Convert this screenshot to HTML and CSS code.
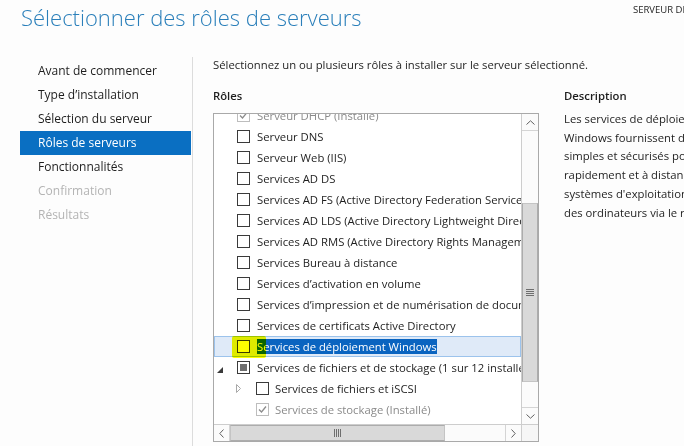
FILE: index.html
```html
<!DOCTYPE html>
<html lang="fr">
<head>
<meta charset="utf-8">
<title>Sélectionner des rôles de serveurs</title>
<link rel="stylesheet" href="styles.css">
</head>
<body>
<div class="page">
  <header class="head">
    <h1 class="title">Sélectionner des rôles de serveurs</h1>
    <div class="server">SERVEUR DE DESTINATION</div>
  </header>
  <div class="main">
    <nav class="steps">
      <div class="step">Avant de commencer</div>
      <div class="step">Type d’installation</div>
      <div class="step">Sélection du serveur</div>
      <div class="step current">Rôles de serveurs</div>
      <div class="step">Fonctionnalités</div>
      <div class="step disabled">Confirmation</div>
      <div class="step disabled">Résultats</div>
    </nav>
    <div class="content">
      <p class="intro">Sélectionnez un ou plusieurs rôles à installer sur le serveur sélectionné.</p>
      <div class="cols">
        <section class="roles">
          <h2 class="label">Rôles</h2>
          <div class="listbox">
            <div class="viewport">
              <div class="tree">
                <div class="row installed"><span class="exp"></span><span class="cb done"><svg viewBox="0 0 11 11" width="11" height="11"><polyline points="2,5.5 4.5,8 9,2.5" fill="none" stroke="#8c8c8c" stroke-width="1.3"/></svg></span><span class="txt">Serveur DHCP (Installé)</span></div>
                <div class="row"><span class="exp"></span><span class="cb"></span><span class="txt">Serveur DNS</span></div>
                <div class="row"><span class="exp"></span><span class="cb"></span><span class="txt">Serveur Web (IIS)</span></div>
                <div class="row"><span class="exp"></span><span class="cb"></span><span class="txt">Services AD DS</span></div>
                <div class="row"><span class="exp"></span><span class="cb"></span><span class="txt">Services AD FS (Active Directory Federation Services)</span></div>
                <div class="row"><span class="exp"></span><span class="cb"></span><span class="txt">Services AD LDS (Active Directory Lightweight Directory Services)</span></div>
                <div class="row"><span class="exp"></span><span class="cb"></span><span class="txt">Services AD RMS (Active Directory Rights Management Services)</span></div>
                <div class="row"><span class="exp"></span><span class="cb"></span><span class="txt">Services Bureau à distance</span></div>
                <div class="row"><span class="exp"></span><span class="cb"></span><span class="txt">Services d’activation en volume</span></div>
                <div class="row"><span class="exp"></span><span class="cb"></span><span class="txt">Services d’impression et de numérisation de documents</span></div>
                <div class="row"><span class="exp"></span><span class="cb"></span><span class="txt">Services de certificats Active Directory</span></div>
                <div class="row selected"><span class="exp"></span><span class="cb"></span><span class="txt"><span class="sel">Services de déploiement Windows</span></span><span class="marker"></span></div>
                <div class="row"><span class="exp"><svg class="tri-open" viewBox="0 0 6 6" width="6" height="6"><polygon points="6,0 6,6 0,6" fill="#3a3a3a"/></svg></span><span class="cb partial"></span><span class="txt">Services de fichiers et de stockage (1 sur 12 installé(s))</span></div>
                <div class="row l1"><span class="exp"><svg viewBox="0 0 6 9" width="6" height="9"><polygon points="0.5,0.5 4.5,4.5 0.5,8.5" fill="none" stroke="#a8a8a8" stroke-width="1"/></svg></span><span class="cb"></span><span class="txt">Services de fichiers et iSCSI</span></div>
                <div class="row l1 installed"><span class="exp"></span><span class="cb done"><svg viewBox="0 0 11 11" width="11" height="11"><polyline points="2,5.5 4.5,8 9,2.5" fill="none" stroke="#8c8c8c" stroke-width="1.3"/></svg></span><span class="txt">Services de stockage (Installé)</span></div>
              </div>
            </div>
            <div class="vscroll">
              <div class="sb-btn up"><svg viewBox="0 0 9 5" width="9" height="5"><polyline points="0.5,4.5 4.5,0.8 8.5,4.5" fill="none" stroke="#606060" stroke-width="1"/></svg></div>
              <div class="vtrack-top"></div>
              <div class="vthumb"><span class="vgrip"></span></div>
              <div class="vtrack-bottom"></div>
              <div class="sb-btn down"><svg viewBox="0 0 9 5" width="9" height="5"><polyline points="0.5,0.5 4.5,4.2 8.5,0.5" fill="none" stroke="#606060" stroke-width="1"/></svg></div>
            </div>
            <div class="hscroll">
              <div class="sb-btn left"><svg viewBox="0 0 5 9" width="5" height="9"><polyline points="4.5,0.5 0.8,4.5 4.5,8.5" fill="none" stroke="#606060" stroke-width="1"/></svg></div>
              <div class="hthumb"><span class="hgrip"></span></div>
              <div class="htrack"></div>
              <div class="sb-btn right"><svg viewBox="0 0 5 9" width="5" height="9"><polyline points="0.5,0.5 4.2,4.5 0.5,8.5" fill="none" stroke="#606060" stroke-width="1"/></svg></div>
            </div>
            <div class="corner"></div>
          </div>
        </section>
        <section class="desc">
          <h2 class="label">Description</h2>
          <p class="desc-text">
            <span class="line">Les services de déploiement</span>
            <span class="line">Windows fournissent des outils</span>
            <span class="line">simples et sécurisés pour déployer</span>
            <span class="line">rapidement et à distance des</span>
            <span class="line">systèmes d'exploitation Windows sur</span>
            <span class="line">des ordinateurs via le réseau.</span>
          </p>
        </section>
      </div>
    </div>
  </div>
</div>
</body>
</html>
```

FILE: styles.css
```css
* { box-sizing: border-box; }
html, body { margin: 0; padding: 0; }
body {
  width: 684px;
  height: 446px;
  overflow: hidden;
  background: #fdfdfd;
  font-family: "Open Sans", "Noto Sans", sans-serif;
  font-size: 11.3px;
  color: #1e1e1e;
}
.page { display: flex; flex-direction: column; height: 446px; }

.head { height: 57px; flex: none; display: flex; align-items: flex-start; }
.title {
  margin: 2px 0 0 21px;
  font-size: 22px;
  font-weight: 300;
  line-height: 30px;
  color: #2a7fba;
  white-space: nowrap;
}
.server {
  margin-left: auto;
  width: 51px;
  margin-top: 4px;
  font-size: 9.5px;
  line-height: 12px;
  white-space: nowrap;
}

.main { flex: 1; display: flex; min-height: 0; }
.steps { width: 193px; flex: none; border-right: 1px solid #dcdcdc; padding-top: 2px; }
.step {
  margin-left: 20px;
  width: 171px;
  height: 24px;
  padding-left: 18px;
  font-size: 12px;
  line-height: 24px;
  white-space: nowrap;
}
.step.current { background: #0a6fc2; color: #fff; }
.step.disabled { color: #b4b4b4; }

.content { flex: 1; min-width: 0; padding-left: 20px; }
.intro { margin: 0; line-height: 16px; white-space: nowrap; }
.cols { display: flex; gap: 25px; margin-top: 15px; }
.roles { flex: none; width: 326px; }
.label { margin: 0; font-size: 11.3px; font-weight: 600; line-height: 16px; }

.listbox {
  margin-top: 9px;
  width: 326px;
  height: 329px;
  border: 1px solid #a9a9a9;
  background: #fff;
  display: grid;
  grid-template-columns: 307px 17px;
  grid-template-rows: 310px 17px;
}
.viewport { overflow: hidden; position: relative; }
.tree { margin-top: -9px; }
.row {
  position: relative;
  height: 21px;
  display: flex;
  align-items: center;
  padding-left: 3px;
  white-space: nowrap;
}
.row.l1 { padding-left: 22px; }
.row.installed .txt { color: #8a8a8a; }
.row.selected { background: #dfeaf8; box-shadow: inset 0 0 0 1px #9cc3ec; }
.exp { width: 20px; flex: none; display: flex; align-items: center; }
.tri-open { margin-top: 5px; }
.cb {
  width: 13px;
  height: 13px;
  flex: none;
  border: 1px solid #3a3a3a;
  background: #fff;
  margin-right: 7px;
  display: flex;
  align-items: center;
  justify-content: center;
}
.row.l1 .cb { margin-right: 6px; }
.cb.done { border-color: #bdbdbd; }
.cb.partial::after { content: ""; width: 7px; height: 7px; background: #6e6e6e; }
.txt { line-height: 15px; }
.sel { background: #0a64c0; color: #fff; }
.marker {
  position: absolute;
  left: 18px;
  top: 0;
  width: 34px;
  height: 22px;
  background: #ffff00;
  mix-blend-mode: multiply;
  border-radius: 2px;
}

.vscroll {
  display: flex;
  flex-direction: column;
  background: #fbfbfb;
  border-left: 1px solid #cdcdcd;
}
.sb-btn { flex: none; display: flex; align-items: center; justify-content: center; }
.vscroll .sb-btn { height: 17px; }
.vscroll .up { border-bottom: 1px solid #d4d4d4; }
.vscroll .down { border-top: 1px solid #d4d4d4; }
.vtrack-top { height: 72px; flex: none; }
.vtrack-bottom { flex: 1; }
.vthumb {
  height: 179px;
  flex: none;
  background: #d9d9d9;
  border-left: 1px solid #acacac;
  border-right: 1px solid #acacac;
  border-top: 1px solid #c4c4c4;
  border-bottom: 1px solid #c4c4c4;
  display: flex;
  align-items: center;
  justify-content: center;
}
.vgrip {
  width: 8px;
  height: 7px;
  background: repeating-linear-gradient(to bottom, #6e6e6e 0 1px, transparent 1px 2px);
}
.hscroll {
  display: flex;
  background: #fbfbfb;
  border-top: 1px solid #cdcdcd;
}
.hscroll .sb-btn { width: 16px; }
.hscroll .left { border-right: 1px solid #d4d4d4; }
.hscroll .right { border-left: 1px solid #d4d4d4; }
.hthumb {
  width: 215px;
  flex: none;
  background: #d9d9d9;
  border-top: 1px solid #acacac;
  border-bottom: 1px solid #acacac;
  border-left: 1px solid #c4c4c4;
  border-right: 1px solid #c4c4c4;
  display: flex;
  align-items: center;
  justify-content: center;
}
.hgrip {
  width: 7px;
  height: 8px;
  background: repeating-linear-gradient(to right, #6e6e6e 0 1px, transparent 1px 2px);
}
.htrack { flex: 1; }
.corner { background: #f6f6f6; border-top: 1px solid #cdcdcd; border-left: 1px solid #cdcdcd; }

.desc { flex: none; width: 220px; }
.desc-text { margin: 6px 0 0; line-height: 18.7px; }
.line { display: block; white-space: nowrap; }
```
